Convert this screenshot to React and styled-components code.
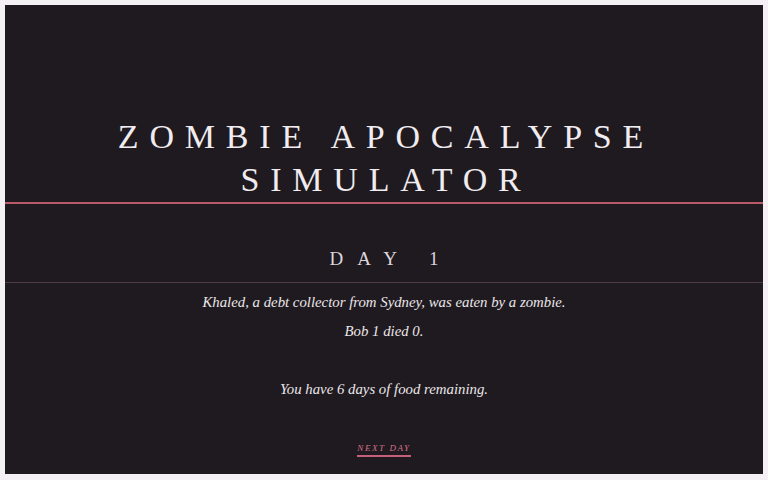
import React from "react";
import styled, { createGlobalStyle } from "styled-components";

const GlobalStyle = createGlobalStyle`
  html, body {
    margin: 0;
    padding: 0;
    background: #f3f1f3;
  }
  #root {
    padding: 5px;
  }
`;

const Screen = styled.main`
  box-sizing: border-box;
  width: 758px;
  height: 469px;
  background: #1f1a1f;
  color: #ede8ec;
  font-family: "Liberation Serif", "DejaVu Serif", serif;
  display: flex;
  flex-direction: column;
  text-align: center;
`;

const Header = styled.header`
  padding: 110px 0 1px;
  border-bottom: 2px solid #b9596a;
`;

const Title = styled.h1`
  margin: 0;
  font-weight: 400;
  font-size: 34px;
  line-height: 43px;
  letter-spacing: 10.8px;
  padding-left: 4px;
  text-transform: uppercase;
  color: #f0ecf0;
`;

const DayBar = styled.section`
  padding: 43px 0 11px;
  border-bottom: 1px solid #4d3b45;
`;

const DayLabel = styled.h2`
  margin: 0;
  font-weight: 400;
  font-size: 19px;
  line-height: 24px;
  letter-spacing: 14px;
  padding-left: 14px;
  color: #dcd6dc;
  text-transform: uppercase;
`;

const Log = styled.section`
  padding-top: 5px;
  display: flex;
  flex-direction: column;
  align-items: center;
`;

const Line = styled.p`
  margin: 0;
  font-style: italic;
  font-size: 14.8px;
  line-height: 29px;
  color: #ebe6ea;
  margin-top: ${(p) => (p.$gap ? "29px" : "0")};
`;

const NextButton = styled.button`
  margin-top: 38px;
  padding: 0 0 1px;
  background: none;
  border: none;
  border-bottom: 2px solid #c4607a;
  color: #d4708a;
  font-family: "Liberation Serif", "DejaVu Serif", serif;
  font-style: italic;
  font-size: 9px;
  line-height: 12px;
  letter-spacing: 1.6px;
  text-transform: uppercase;
  cursor: pointer;
`;

export default function App() {
  return (
    <>
      <GlobalStyle />
      <Screen>
        <Header>
          <Title>
            Zombie Apocalypse
            <br />
            Simulator
          </Title>
        </Header>
        <DayBar>
          <DayLabel>Day 1</DayLabel>
        </DayBar>
        <Log>
          <Line>Khaled, a debt collector from Sydney, was eaten by a zombie.</Line>
          <Line>Bob 1 died 0.</Line>
          <Line $gap>You have 6 days of food remaining.</Line>
          <NextButton>Next Day</NextButton>
        </Log>
      </Screen>
    </>
  );
}
